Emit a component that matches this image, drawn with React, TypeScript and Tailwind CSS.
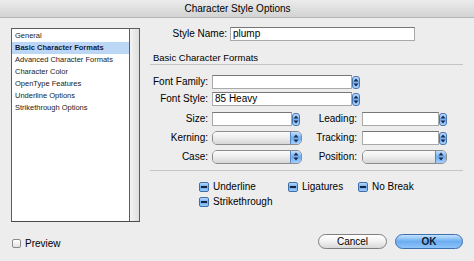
import type { ReactNode } from 'react'

const font = { fontFamily: '"Liberation Sans", Arial, sans-serif' }

const sections = [
  'General',
  'Basic Character Formats',
  'Advanced Character Formats',
  'Character Color',
  'OpenType Features',
  'Underline Options',
  'Strikethrough Options',
]

// Tiny aqua up/down arrows, used by steppers and popup caps.
function Arrows() {
  return (
    <svg width="6" height="9" viewBox="0 0 6 9">
      <path d="M3 0.5 L5.5 3.5 L0.5 3.5 Z" fill="#1d2b45" />
      <path d="M3 8.5 L5.5 5.5 L0.5 5.5 Z" fill="#1d2b45" />
    </svg>
  )
}

function Stepper() {
  return (
    <div className="flex h-[13px] w-[8px] shrink-0 items-center justify-center rounded-[3px] border border-[#4a77b4] bg-gradient-to-b from-[#bcdcff] via-[#74b0f2] to-[#a9d3ff]">
      <Arrows />
    </div>
  )
}

function TextField({ width, value }: { width: string; value?: string }) {
  return (
    <div className={`flex h-[14px] items-center ${width}`}>
      <div className="flex h-full flex-1 items-center border border-[#a9a9a9] border-t-[#767676] bg-white pl-[2px] text-[10px] leading-none">
        {value}
      </div>
      <Stepper />
    </div>
  )
}

function Popup({ width }: { width: string }) {
  return (
    <div
      className={`flex h-[14px] overflow-hidden rounded-[5px] border border-[#8c8c8c] ${width}`}
    >
      <div className="flex-1 bg-gradient-to-b from-[#fbfbfb] via-[#ececec] to-[#d6d6d6]" />
      <div className="flex w-[11px] items-center justify-center border-l border-[#5a86c2] bg-gradient-to-b from-[#c3e0ff] via-[#6eacf0] to-[#a4cfff]">
        <Arrows />
      </div>
    </div>
  )
}

function Label({ width, children }: { width: string; children: ReactNode }) {
  return <div className={`${width} shrink-0 text-right text-[10px] leading-none`}>{children}</div>
}

function MixedBox({ label }: { label: string }) {
  return (
    <div className="flex items-center gap-[4px] text-[10px] leading-none">
      <div className="flex h-[10px] w-[10px] items-center justify-center rounded-[2px] border border-[#3f6ea8] bg-gradient-to-b from-[#b7dafe] via-[#6aa9ec] to-[#9ccbfb]">
        <div className="h-[2px] w-[6px] bg-[#17243d]" />
      </div>
      <span>{label}</span>
    </div>
  )
}

export default function App() {
  return (
    <div className="h-[261px] w-[474px] overflow-hidden bg-[#ededed] text-black" style={font}>
      <div className="flex h-[18px] items-center justify-center border-b border-[#b4b4b4] bg-gradient-to-b from-[#ececec] to-[#d3d3d3] pl-[1px] text-[10px]">
        Character Style Options
      </div>

      <div className="flex h-[204px] pt-[9px]">
        {/* section list */}
        <div className="ml-[11px] mt-[1px] flex h-[194px] w-[129px] border border-[#5c5c5c] border-b-[#4a4a4a] bg-white">
          <div className="flex-1 pt-[1px]">
            {sections.map((s, i) => (
              <div
                key={s}
                className={`flex h-[12px] items-center pl-[3px] text-[7.5px] leading-none ${
                  i === 1 ? 'bg-[#bcd6f6] font-bold text-[#12203c]' : 'text-[#222]'
                }`}
              >
                {s}
              </div>
            ))}
          </div>
          <div className="w-[10px] border-l border-[#5c5c5c] bg-gradient-to-r from-[#f4f4f4] to-[#dedede]" />
        </div>

        {/* form */}
        <div className="ml-[10px] flex w-[313px] flex-col">
          <div className="flex h-[14px] items-center">
            <Label width="w-[77px]">Style Name:</Label>
            <div className="ml-[3px] flex h-full w-[185px] items-center border border-[#a9a9a9] border-t-[#767676] bg-white pl-[2px] text-[10px] leading-none">
              plump
            </div>
          </div>

          <div className="mt-[11px] h-[13px] border-b border-[#c4c4c4] pl-[3px] text-[9.5px] leading-[11px]">
            Basic Character Formats
          </div>

          <div className="mt-[10px] flex h-[14px] items-center">
            <Label width="w-[58px]">Font Family:</Label>
            <div className="ml-[4px]">
              <TextField width="w-[148px]" />
            </div>
          </div>

          <div className="mt-[3px] flex h-[14px] items-center">
            <Label width="w-[58px]">Font Style:</Label>
            <div className="ml-[4px]">
              <TextField width="w-[148px]" value="85 Heavy" />
            </div>
          </div>

          <div className="mt-[6px] flex h-[14px] items-center">
            <Label width="w-[58px]">Size:</Label>
            <div className="ml-[4px]">
              <TextField width="w-[88px]" />
            </div>
            <Label width="w-[57px]">Leading:</Label>
            <div className="ml-[5px]">
              <TextField width="w-[85px]" />
            </div>
          </div>

          <div className="mt-[5px] flex h-[14px] items-center">
            <Label width="w-[58px]">Kerning:</Label>
            <div className="ml-[4px]">
              <Popup width="w-[90px]" />
            </div>
            <Label width="w-[55px]">Tracking:</Label>
            <div className="ml-[5px]">
              <TextField width="w-[85px]" />
            </div>
          </div>

          <div className="mt-[4px] flex h-[15px] items-center">
            <Label width="w-[58px]">Case:</Label>
            <div className="ml-[4px]">
              <Popup width="w-[90px]" />
            </div>
            <Label width="w-[55px]">Position:</Label>
            <div className="ml-[5px]">
              <Popup width="w-[85px]" />
            </div>
          </div>

          <div className="mt-[6px] h-px bg-[#c4c4c4]" />

          <div className="mt-[11px] flex pl-[49px]">
            <div className="w-[89px]">
              <MixedBox label="Underline" />
            </div>
            <div className="w-[70px]">
              <MixedBox label="Ligatures" />
            </div>
            <MixedBox label="No Break" />
          </div>
          <div className="mt-[5px] flex pl-[49px]">
            <MixedBox label="Strikethrough" />
          </div>
        </div>
      </div>

      {/* footer */}
      <div className="flex items-center pt-[12px]">
        <div className="ml-[12px] flex items-center gap-[4px] pt-[4px] text-[10px] leading-none">
          <div className="h-[9px] w-[9px] rounded-[2px] border border-[#8a8a8a] bg-gradient-to-b from-white to-[#e2e2e2]" />
          <span>Preview</span>
        </div>
        <button className="ml-auto flex h-[15px] w-[69px] items-center justify-center rounded-full border border-[#7f7f7f] bg-gradient-to-b from-white via-[#f1f1f1] to-[#d8d8d8] text-[10px] leading-none">
          Cancel
        </button>
        <button className="ml-[8px] mr-[11px] flex h-[15px] w-[68px] items-center justify-center rounded-full border border-[#3e6fae] bg-gradient-to-b from-[#c4e2ff] via-[#6badf0] to-[#8ec4fa] text-[10px] font-bold leading-none text-[#0d1a30]">
          OK
        </button>
      </div>
    </div>
  )
}
